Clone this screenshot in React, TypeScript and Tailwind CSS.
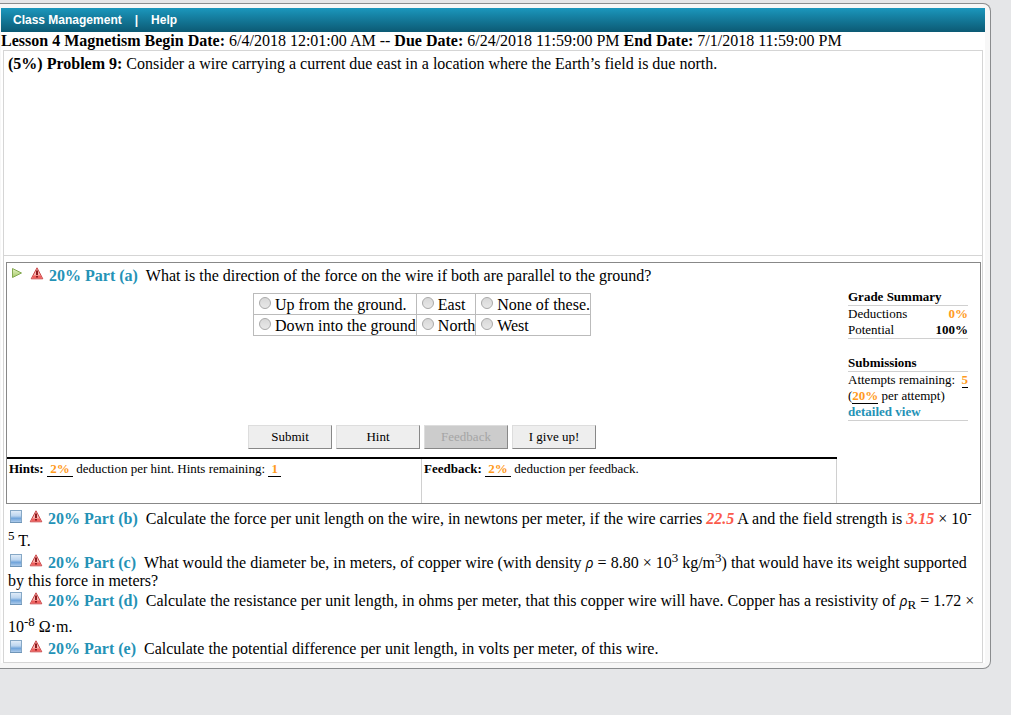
import React, { useState } from 'react';
import type { ReactNode } from 'react';

const choices = [
    ['Up from the ground.', 'East', 'None of these.'],
    ['Down into the ground', 'North', 'West'],
];

function WarningIcon() {
    return (
        <svg width="14" height="14" viewBox="0 0 14 14" className="block shrink-0" aria-hidden="true">
            <path d="M7 0.8 12.8 11.8H1.2Z" fill="#f8b5b0" stroke="#c8484a" strokeWidth="1" strokeLinejoin="round" />
            <path d="M3.4 8.4h7.2l1.4 2.8H2Z" fill="#f0605e" />
            <path d="M6 3.6h2v4.4H6zM6 9h2v1.4H6z" fill="#8c1a1e" />
        </svg>
    );
}

function PlayIcon() {
    return (
        <svg width="12" height="12" viewBox="0 0 12 12" className="block shrink-0" aria-hidden="true">
            <defs>
                <linearGradient id="play-fill" x1="0" y1="0" x2="0" y2="1">
                    <stop offset="0" stopColor="#e6f2c4" />
                    <stop offset="1" stopColor="#a5cb68" />
                </linearGradient>
            </defs>
            <path d="M1.5 1.5 10.5 6 1.5 10.5Z" fill="url(#play-fill)" stroke="#84a951" strokeLinejoin="round" />
        </svg>
    );
}

function BoxIcon() {
    return (
        <svg width="12" height="13" viewBox="0 0 12 13" className="block shrink-0" aria-hidden="true">
            <defs>
                <linearGradient id="box-fill" x1="0" y1="0" x2="0" y2="1">
                    <stop offset="0" stopColor="#e3eef9" />
                    <stop offset="0.45" stopColor="#bcd5ef" />
                    <stop offset="0.65" stopColor="#6fa3da" />
                    <stop offset="1" stopColor="#b5d0ec" />
                </linearGradient>
            </defs>
            <rect x="0.5" y="0.5" width="11" height="12" fill="url(#box-fill)" stroke="#86a8c6" />
            <path d="M0 12.5h12" stroke="#6f95b8" />
        </svg>
    );
}

function Orange({ children }: { children: ReactNode }) {
    return <span className="border-b border-black font-bold text-[#ff9a1c]">{children}</span>;
}

function Rho() {
    return <i className="font-['Open_Sans',sans-serif] text-sm leading-none">ρ</i>;
}

function Part({ letter, className, children }: { letter: string; className: string; children: ReactNode }) {
    return (
        <div className={className}>
            <span className="mr-[5px] ml-0.5 inline-flex gap-[7px] align-[1px] leading-none">
                <BoxIcon />
                <WarningIcon />
            </span>
            <a href="#" className="mr-2 font-bold text-[#2492b6]">{`20% Part (${letter})`}</a>
            {children}
        </div>
    );
}

export default function App() {
    const [answer, setAnswer] = useState('');

    const button = 'h-6 w-[84px] border border-t-[#ddd] border-r-[#888] border-b-[#888] border-l-[#ddd] bg-[#eee] text-[13px]';

    return (
        <div className="min-h-screen bg-[#e5e6e8] pt-[3px] font-['Liberation_Serif',serif] text-base text-black">
            <div className="mr-5 rounded-r-lg border border-l-0 border-[#8a8c8e] bg-[#f7f7f7] pt-1 pr-[5px] pb-[5px] pl-px">
                {/* Menu */}
                <nav className="flex h-6 items-center gap-[13px] bg-linear-to-b from-[#1b97bd] to-[#0c5a74] px-3 font-['Liberation_Sans',sans-serif] text-xs font-bold text-white">
                    <a href="#">Class Management</a>
                    <span>|</span>
                    <a href="#">Help</a>
                </nav>

                <main className="bg-white">
                    <h1 className="leading-[18px]">
                        <b>Lesson 4 Magnetism</b> <b>Begin Date:</b> 6/4/2018 12:01:00 AM -- <b>Due Date:</b> 6/24/2018 11:59:00 PM <b>End Date:</b> 7/1/2018 11:59:00 PM
                    </h1>

                    <div className="mx-0.5 border border-[#d5d5d5]">
                        <div className="min-h-[205px] border-b border-[#d5d5d5] px-1 py-1 leading-[18px]">
                            <b>(5%) Problem 9:</b> Consider a wire carrying a current due east in a location where the Earth’s field is due north.
                        </div>

                        {/* Part (a) */}
                        <section className="mr-px ml-0.5 mt-1.5 flex border border-[#888]">
                            <div className="w-[830px]">
                                <div className="flex h-[30px] items-start px-1 pt-1 leading-[18px]">
                                    <PlayIcon />
                                    <span className="mr-[5px] ml-[7px]"><WarningIcon /></span>
                                    <a href="#" className="mr-2 font-bold text-[#2492b6]">20% Part (a)</a>
                                    <span>What is the direction of the force on the wire if both are parallel to the ground?</span>
                                </div>

                                <div className="h-[132px]">
                                    <table className="mx-auto border-collapse">
                                        <tbody>
                                            {choices.map((row) => (
                                                <tr key={row[0]}>
                                                    {row.map((choice) => (
                                                        <td key={choice} className="h-[21px] border border-[#bbb] p-0">
                                                            <label className="flex h-5 items-center gap-1 pl-[5px] leading-5">
                                                                <input
                                                                    type="radio"
                                                                    name="direction"
                                                                    value={choice}
                                                                    checked={answer === choice}
                                                                    onChange={() => setAnswer(choice)}
                                                                    className="mb-0.5 size-3 appearance-none rounded-full border border-[#aaa] bg-linear-to-b from-[#d8d8d8] to-[#e8e8e8] checked:bg-[#666]"
                                                                />
                                                                <span className="pt-0.5">{choice}</span>
                                                            </label>
                                                        </td>
                                                    ))}
                                                </tr>
                                            ))}
                                        </tbody>
                                    </table>
                                </div>

                                <div className="flex justify-center gap-1 pb-2">
                                    <button type="button" className={button}>Submit</button>
                                    <button type="button" className={button}>Hint</button>
                                    <button type="button" disabled className="h-6 w-[84px] border border-t-[#ddd] border-r-[#888] border-b-[#888] border-l-[#ddd] bg-[#ccc] text-[13px] text-[#a5a5a5]">Feedback</button>
                                    <button type="button" className={button}>I give up!</button>
                                </div>

                                <div className="grid h-[46px] grid-cols-[1fr_416px] border-t-2 border-black text-[13px] leading-4">
                                    <div className="px-0.5 pt-0.5">
                                        <b>Hints:</b> <Orange>&nbsp;2%&nbsp;</Orange> deduction per hint. Hints remaining: <Orange>&nbsp;1&nbsp;</Orange>
                                    </div>
                                    <div className="border-x border-[#d0d0d0] px-0.5 pt-0.5">
                                        <b>Feedback:</b> <Orange>&nbsp;2%&nbsp;</Orange> deduction per feedback.
                                    </div>
                                </div>
                            </div>

                            {/* Grade summary */}
                            <aside className="ml-[11px] w-[120px] pt-[26px] text-[13px] leading-4">
                                <h2 className="h-[17px] border-b border-[#d0d0d0] font-bold">Grade Summary</h2>
                                <div className="mb-4 border-b border-[#d0d0d0]">
                                    <div className="flex justify-between">Deductions <b className="text-[#ff9a1c]">0%</b></div>
                                    <div className="flex justify-between">Potential <b>100%</b></div>
                                </div>
                                <h2 className="h-[17px] border-b border-[#d0d0d0] font-bold">Submissions</h2>
                                <div className="border-b border-[#d0d0d0] whitespace-nowrap">
                                    <div className="flex h-4 justify-between">Attempts remaining: <Orange>5</Orange></div>
                                    <div>(<Orange>20%</Orange> per attempt)</div>
                                    <a href="#" className="block font-bold text-[#2492b6]">detailed view</a>
                                </div>
                            </aside>
                        </section>

                        {/* Remaining parts */}
                        <section className="px-1 pt-1 pb-1">
                            <Part letter="b" className="leading-[22px]">
                                Calculate the force per unit length on the wire, in newtons per meter, if the wire carries <b className="italic text-[#fb5a4b]">22.5</b> A and the field strength is <b className="italic text-[#fb5a4b]">3.15</b> × 10<sup className="text-[13px]">-<wbr />5</sup> T.
                            </Part>
                            <Part letter="c" className="pt-0.5 leading-[18px]">
                                What would the diameter be, in meters, of copper wire (with density <Rho /> = 8.80 × 10<sup className="text-[13px]">3</sup> kg/m<sup className="text-[13px]">3</sup>) that would have its weight supported by this force in meters?
                            </Part>
                            <Part letter="d" className="-mt-0.5 leading-[26px]">
                                Calculate the resistance per unit length, in ohms per meter, that this copper wire will have. Copper has a resistivity of <Rho /><sub className="text-[13px]">R</sub> = 1.72 × 10<sup className="text-[13px]">-8</sup> Ω·m.
                            </Part>
                            <Part letter="e" className="leading-[18px]">
                                Calculate the potential difference per unit length, in volts per meter, of this wire.
                            </Part>
                        </section>
                    </div>
                </main>
            </div>
        </div>
    );
}
